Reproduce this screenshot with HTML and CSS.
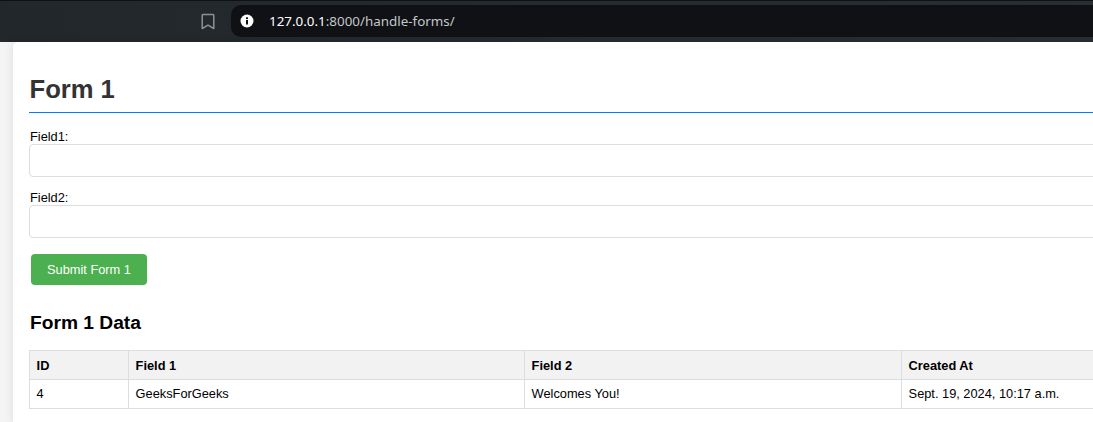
FILE: index.html
```html
<!DOCTYPE html>
<html lang="en">

<head>
    <meta charset="UTF-8">
    <meta name="viewport" content="width=device-width, initial-scale=1.0">
    <title>Handle Forms</title>
    <link rel="stylesheet" href="styles.css">
</head>

<body>

    <!-- Browser toolbar -->
    <div class="toolbar">
        <svg class="bookmark" width="14" height="17" viewBox="0 0 14 17" fill="none" stroke="#8b9296" stroke-width="1.5">
            <path d="M2 1.5h10a.8.8 0 0 1 .8.8v13.2L7 12.2 1.200 15.500V2.300a.8.8 0 0 1 .8-.8z" stroke-linejoin="round"/>
        </svg>
        <div class="address-bar">
            <svg class="info" width="14" height="14" viewBox="0 0 14 14">
                <circle cx="7" cy="7" r="6.500" fill="#fff"/>
                <rect x="6" y="6" width="2" height="4.500" fill="#0f1115"/>
                <rect x="6" y="3.300" width="2" height="1.800" fill="#0f1115"/>
            </svg>
            <span class="url">127.0.0.1<span class="url-rest">:8000/handle-forms/</span></span>
        </div>
    </div>

    <div class="page">
        <div class="container">
            <h1>Form 1</h1>

            <form class="data-form">
                <div class="form-group">
                    <label for="field1">Field1:</label>
                    <input type="text" id="field1">
                </div>
                <div class="form-group">
                    <label for="field2">Field2:</label>
                    <input type="text" id="field2">
                </div>
                <button type="button" class="submit-btn">Submit Form 1</button>
            </form>

            <h2>Form 1 Data</h2>

            <table>
                <thead>
                    <tr>
                        <th class="col-id">ID</th>
                        <th class="col-one">Field 1</th>
                        <th class="col-two">Field 2</th>
                        <th>Created At</th>
                    </tr>
                </thead>
                <tbody>
                    <tr>
                        <td>4</td>
                        <td>GeeksForGeeks</td>
                        <td>Welcomes You!</td>
                        <td>Sept. 19, 2024, 10:17 a.m.</td>
                    </tr>
                </tbody>
            </table>
        </div>
    </div>

</body>

</html>
```

FILE: styles.css
```css
/* Basic styling */
html,
body {
    margin: 0;
    height: 100%;
    overflow: hidden;
}

body {
    font-family: "Liberation Sans", Arial, sans-serif;
    background-color: #f4f4f4;
}

/* Browser toolbar */
.toolbar {
    display: flex;
    align-items: center;
    height: 42px;
    padding: 4px 0 5px 201px;
    box-sizing: border-box;
    background: linear-gradient(to right, #21272b, #282e32);
    border-top: 1px solid #0f1115;
}

.bookmark {
    flex: none;
}

.address-bar {
    display: flex;
    align-items: center;
    flex: none;
    width: 1000px;
    height: 32px;
    margin-left: 16px;
    padding-left: 9px;
    background-color: #0f1115;
    border-radius: 10px 0 0 10px;
}

.info {
    flex: none;
}

.url {
    margin-left: 15px;
    font-family: "Noto Sans", sans-serif;
    font-size: 13.4px;
    color: #fff;
}

.url-rest {
    color: #c4c7c9;
}

/* Page */
.page {
    padding-left: 13px;
}

.container {
    width: 1200px;
    height: 380px;
    padding: 24px 16px 0;
    box-sizing: border-box;
    background-color: white;
    border-radius: 5px 0 0 0;
    box-shadow: 0 0 10px rgba(0, 0, 0, 0.1);
}

h1 {
    margin: 0 0 16px;
    padding-left: 0.5px;
    font-size: 25.6px;
    line-height: 46px;
    color: #333;
    border-bottom: 1px solid #0080ff;
}

.form-group {
    margin-bottom: 13px;
}

.form-group label {
    display: block;
    padding-left: 1px;
    font-size: 12.8px;
    line-height: 15px;
    color: #000;
}

.form-group input {
    display: block;
    width: 100%;
    height: 33px;
    box-sizing: border-box;
    border: 1px solid #ddd;
    border-radius: 4px;
    background-color: white;
}

.submit-btn {
    display: block;
    width: 116px;
    height: 31px;
    margin: 16px 0 0 2px;
    padding: 0;
    font-family: inherit;
    font-size: 12.8px;
    color: white;
    background-color: #4CAF50;
    border: none;
    border-radius: 4px;
}

h2 {
    margin: 26px 0 15px;
    padding-left: 1px;
    font-size: 19.2px;
    line-height: 24px;
    color: #000;
}

table {
    width: 100%;
    border-collapse: collapse;
    table-layout: fixed;
    font-size: 12.8px;
}

th,
td {
    height: 29px;
    padding: 0 6.6px;
    box-sizing: border-box;
    text-align: left;
    color: #000;
    border: 1px solid #ddd;
}

td {
    padding-bottom: 1px;
}

th {
    background-color: #f2f2f2;
}

.col-id {
    width: 99px;
}

.col-one {
    width: 396px;
}

.col-two {
    width: 377px;
}
```
